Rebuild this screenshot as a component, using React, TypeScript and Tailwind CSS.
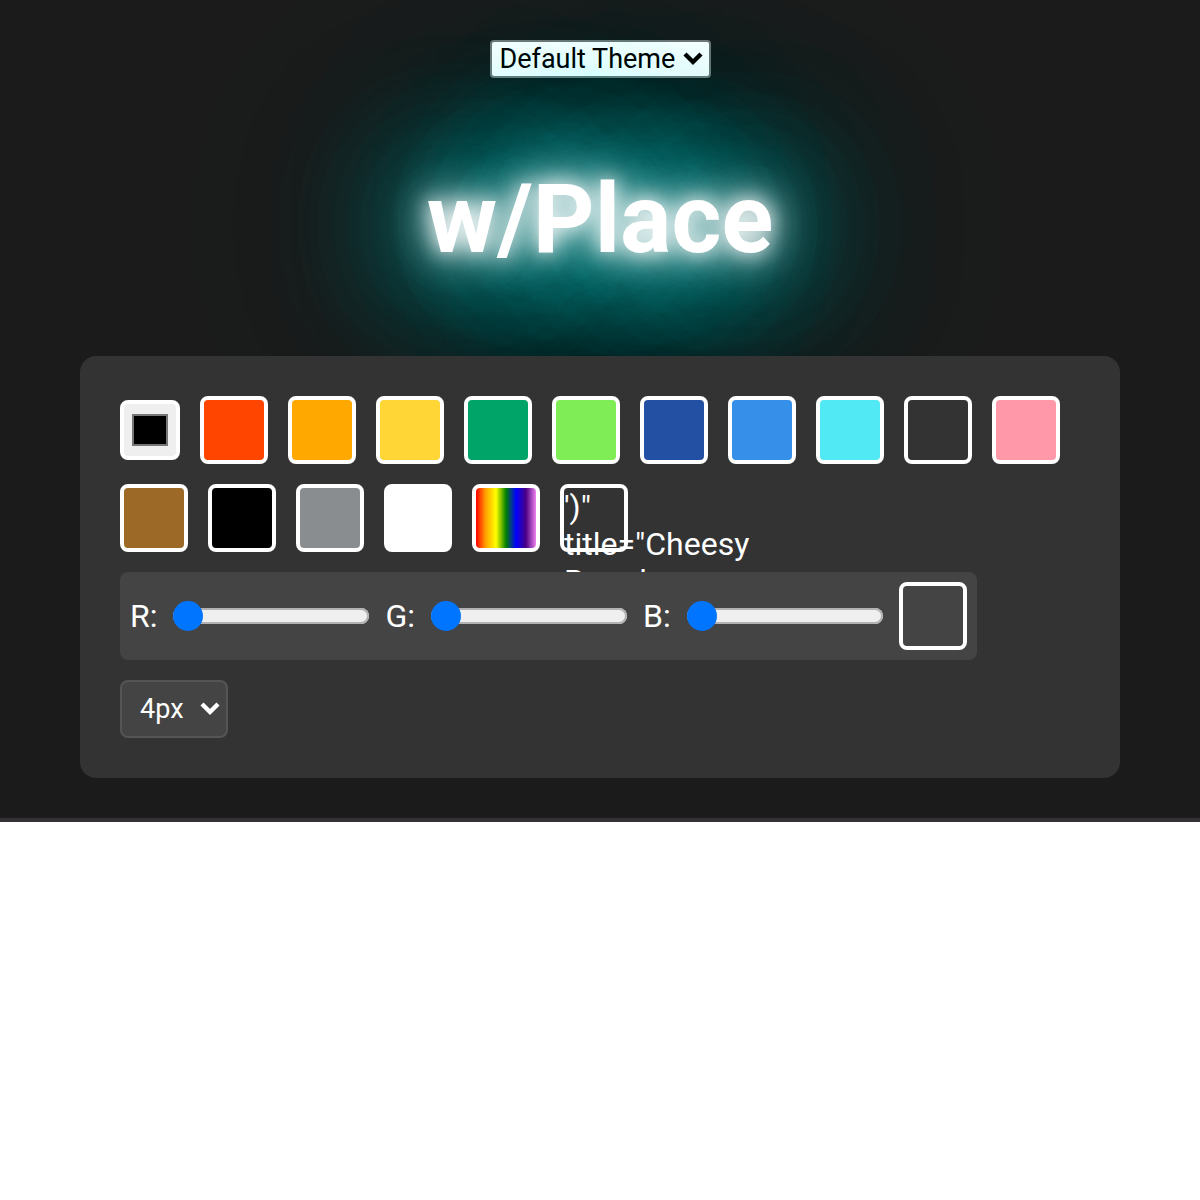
import React, { useState } from 'react';

const SWATCHES = [
    { name: 'Red', bg: 'bg-[#ff4500]' },
    { name: 'Orange', bg: 'bg-[#ffa800]' },
    { name: 'Yellow', bg: 'bg-[#ffd635]' },
    { name: 'Green', bg: 'bg-[#00a368]' },
    { name: 'Light green', bg: 'bg-[#7eed56]' },
    { name: 'Dark blue', bg: 'bg-[#2450a4]' },
    { name: 'Blue', bg: 'bg-[#3690ea]' },
    { name: 'Light blue', bg: 'bg-[#51e9f4]' },
    { name: 'Transparent', bg: 'bg-transparent' },
    { name: 'Pink', bg: 'bg-[#ff99aa]' },
    { name: 'Brown', bg: 'bg-[#9c6926]' },
    { name: 'Black', bg: 'bg-black' },
    { name: 'Gray', bg: 'bg-[#898d90]' },
    { name: 'White', bg: 'bg-white' },
    { name: 'Rainbow', bg: 'bg-[linear-gradient(to_right,red,orange,yellow,green,blue,indigo,violet)]' },
];

const Chevron: React.FC<{ className: string }> = ({ className }) => (
    <svg viewBox="0 0 20 14" className={`pointer-events-none absolute w-5 h-3.5 ${className}`} fill="none" stroke="currentColor" strokeWidth="4.4">
        <path d="M2 2 L10 10 L18 2" />
    </svg>
);

const ChannelSlider: React.FC<{ id: string; label: string; value: number; onChange: (v: number) => void }> = ({ id, label, value, onChange }) => (
    <>
        <label htmlFor={id}>{label}:</label>
        <input
            id={id}
            type="range"
            min={0}
            max={255}
            value={value}
            onChange={(e) => onChange(Number(e.target.value))}
            className="w-[196px] h-8 appearance-none bg-transparent [&::-webkit-slider-runnable-track]:h-4 [&::-webkit-slider-runnable-track]:rounded-full [&::-webkit-slider-runnable-track]:bg-[#efefef] [&::-webkit-slider-runnable-track]:shadow-[inset_0_0_0_2px_#b2b2b2] [&::-webkit-slider-thumb]:appearance-none [&::-webkit-slider-thumb]:w-[30px] [&::-webkit-slider-thumb]:h-[30px] [&::-webkit-slider-thumb]:-mt-[7px] [&::-webkit-slider-thumb]:rounded-full [&::-webkit-slider-thumb]:bg-[#0075ff]"
        />
    </>
);

const App: React.FC = () => {
    const [theme, setTheme] = useState('default');
    const [color, setColor] = useState('#000000');
    const [size, setSize] = useState('4');
    const [rgb, setRgb] = useState({ r: 0, g: 0, b: 0 });
    const mixed = rgb.r + rgb.g + rgb.b > 0;

    return (
        <div className="overflow-hidden bg-[#1b1b1b] border-b-4 border-[#343234] px-20 py-10 text-white text-[32px] leading-[38px] font-[Roboto,sans-serif]">
            {/* Theme picker */}
            <div className="flex justify-center">
                <div className="relative text-black">
                    <select
                        aria-label="Theme"
                        value={theme}
                        onChange={(e) => setTheme(e.target.value)}
                        className="block h-[38px] appearance-none rounded-[4px] border-2 border-[#767676] bg-white pl-2 pr-8 text-[27px] leading-8"
                    >
                        <option value="default">Default Theme</option>
                    </select>
                    <Chevron className="right-2 top-3" />
                </div>
            </div>

            <h1 className="relative pointer-events-none mt-[84px] mb-20 text-center text-[96px] leading-[114px] font-bold [text-shadow:0_0_20px_#fff,0_0_40px_#fff,0_0_60px_rgba(255,255,255,0.5),0_0_80px_#008080,0_0_120px_#00cccc,0_0_160px_#00ffff,0_0_160px_#00ffff,0_0_200px_#00cccc,0_0_300px_#008080]">
                w/Place
            </h1>

            {/* Palette */}
            <div className="relative flex flex-wrap items-center gap-5 rounded-2xl bg-[#333333] p-10">
                <input
                    type="color"
                    aria-label="Custom color"
                    value={color}
                    onChange={(e) => setColor(e.target.value)}
                    className="w-[60px] h-[60px] rounded-lg border-4 border-white bg-[#efefef] px-1 py-0.5 [&::-webkit-color-swatch-wrapper]:px-1 [&::-webkit-color-swatch-wrapper]:py-2 [&::-webkit-color-swatch]:border-2 [&::-webkit-color-swatch]:border-[#777777]"
                />
                {SWATCHES.map((s) => (
                    <button key={s.name} type="button" aria-label={s.name} className={`w-[68px] h-[68px] rounded-lg border-4 border-white bg-origin-padding ${s.bg}`} />
                ))}
                <button type="button" className="flex items-start w-[68px] h-[68px] rounded-lg border-4 border-white text-left">
                    <span className="w-min pt-px leading-[37px]">')" title="Cheesy Bread</span>
                </button>

                {/* RGB mixer */}
                <div className="relative flex items-center gap-4 rounded-lg bg-[#444444] p-2.5">
                    <ChannelSlider id="red" label="R" value={rgb.r} onChange={(r) => setRgb({ ...rgb, r })} />
                    <ChannelSlider id="green" label="G" value={rgb.g} onChange={(g) => setRgb({ ...rgb, g })} />
                    <ChannelSlider id="blue" label="B" value={rgb.b} onChange={(b) => setRgb({ ...rgb, b })} />
                    <button
                        type="button"
                        aria-label="Mixed color"
                        className="w-[68px] h-[68px] rounded-lg border-4 border-white"
                        style={{ backgroundColor: mixed ? `rgb(${rgb.r}, ${rgb.g}, ${rgb.b})` : undefined }}
                    />
                </div>

                <div className="relative">
                    <select
                        aria-label="Brush size"
                        value={size}
                        onChange={(e) => setSize(e.target.value)}
                        className="block w-[108px] h-[58px] appearance-none rounded-lg border-2 border-[#555555] bg-[#444444] pl-[18px] text-[27px] leading-8"
                    >
                        <option value="4">4px</option>
                    </select>
                    <Chevron className="right-2 top-[22px]" />
                </div>
            </div>
        </div>
    );
};

export default App;
